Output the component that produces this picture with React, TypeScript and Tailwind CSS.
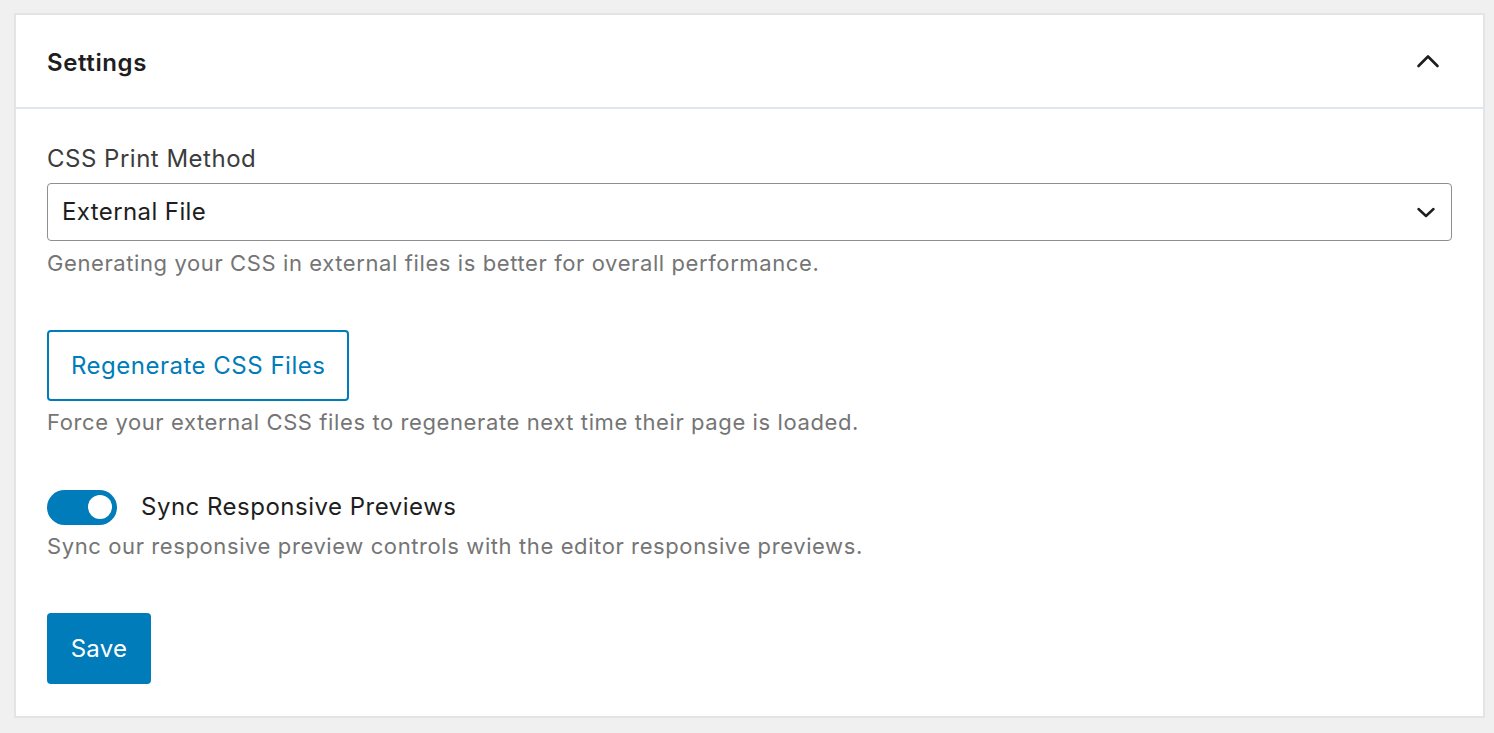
export default function App() {
  return (
    <div className="min-h-[733px] bg-[#f0f0f0] pt-[13px] pl-[14px] pr-[9px] font-['Inter','Noto_Sans',sans-serif]">
      <div className="bg-white border-2 border-[#e4e4e4] h-[705px]">
        {/* Header */}
        <div className="flex items-center justify-between h-[94px] pl-[31px] pr-[43px] border-b-2 border-[#dde7f0]">
          <h2 className="mt-[4px] text-[24px] tracking-[0.6px] font-semibold text-[#1e1e1e]">Settings</h2>
          <svg width="24" height="14" viewBox="0 0 24 14" fill="none" className="text-[#1e1e1e]">
            <path d="M2.5 12 L12 2.5 L21.5 12" stroke="currentColor" strokeWidth="2.6" strokeLinecap="round" strokeLinejoin="round" />
          </svg>
        </div>

        {/* Body */}
        <div className="pl-[31px] pr-[31px] pt-[34px]">
          <label className="block text-[24px] tracking-[0.5px] leading-[32px] text-[#3c3c3c]">CSS Print Method</label>
          <div className="mt-[8px] flex items-center justify-between h-[58px] border-[1.5px] border-[#8c8f94] rounded-[4px] pl-[14px] pr-[16px]">
            <span className="text-[24px] tracking-[0.4px] text-[#1e1e1e]">External File</span>
            <svg width="18" height="11" viewBox="0 0 18 11" fill="none" className="text-[#1e1e1e]">
              <path d="M1.5 2 L9 9 L16.5 2" stroke="currentColor" strokeWidth="2.4" strokeLinecap="round" strokeLinejoin="round" />
            </svg>
          </div>
          <p className="mt-[7px] text-[22px] tracking-[0.6px] leading-[30px] text-[#757575]">
            Generating your CSS in external files is better for overall performance.
          </p>

          <button className="mt-[52px] h-[71px] px-[22px] border-2 border-[#007cba] rounded-[4px] text-[24px] tracking-[0.5px] text-[#007cba] bg-white">
            Regenerate CSS Files
          </button>
          <p className="mt-[6px] text-[22px] tracking-[0.6px] leading-[30px] text-[#757575]">
            Force your external CSS files to regenerate next time their page is loaded.
          </p>

          <div className="mt-[52px] flex items-center gap-[24px]">
            <div className="w-[70px] h-[35px] rounded-full bg-[#007cba] flex items-center justify-end pr-[5px]">
              <div className="w-[24px] h-[24px] rounded-full bg-white" />
            </div>
            <span className="text-[24px] tracking-[0.5px] text-[#1e1e1e]">Sync Responsive Previews</span>
          </div>
          <p className="mt-[6px] text-[22px] tracking-[0.6px] leading-[30px] text-[#757575]">
            Sync our responsive preview controls with the editor responsive previews.
          </p>

          <button className="mt-[52px] h-[71px] w-[104px] rounded-[4px] bg-[#007cba] text-[24px] tracking-[0.3px] text-white">
            Save
          </button>
        </div>
      </div>
    </div>
  );
}
